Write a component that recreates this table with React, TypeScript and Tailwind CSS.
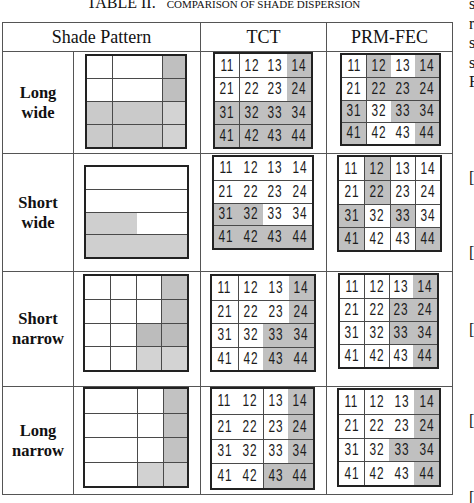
import React from "react";

const serif = { fontFamily: '"Liberation Serif", "Times New Roman", serif' };
const sans = { fontFamily: '"Liberation Sans", Arial, sans-serif' };

type NumGridProps = {
  box: string;
  pad: string;
  shade: string;
  vl: [boolean, boolean, boolean];
};

function NumGrid({ box, pad, shade, vl }: NumGridProps) {
  const s = shade.replace(/\s/g, "");
  const cells = [];
  for (let r = 0; r < 4; r++) {
    for (let c = 0; c < 4; c++) {
      const g = s[r * 4 + c] === "1";
      const left = c > 0 && vl[c - 1];
      cells.push(
        <div
          key={r * 4 + c}
          className={`flex items-center justify-center text-[16px] leading-none text-[#1c1c1c] ${g ? "bg-[#c0c0c0]" : "bg-white"} ${r > 0 ? "border-t border-t-[#4a4a4a]" : ""} ${left ? "border-l border-l-[#4a4a4a]" : ""}`}
          style={sans}
        >
          <span className="inline-block scale-x-[0.74] tracking-[1px]">{`${r + 1}${c + 1}`}</span>
        </div>
      );
    }
  }
  return (
    <div className={`flex ${pad}`}>
      <div className={`grid grid-cols-4 grid-rows-4 border-2 border-[#222] ${box}`}>{cells}</div>
    </div>
  );
}

type PCell = { w: string; bg: string; line?: boolean };

function Pattern({ box, pad, rows }: { box: string; pad: string; rows: PCell[][] }) {
  return (
    <div className={`flex ${pad}`}>
      <div className={`flex flex-col border-2 border-[#222] ${box}`}>
        {rows.map((row, i) => (
          <div key={i} className={`flex flex-1 ${i > 0 ? "border-t border-t-[#4a4a4a]" : ""}`}>
            {row.map((c, j) => (
              <div
                key={j}
                className={`${c.w} ${c.bg} ${j > 0 && c.line !== false ? "border-l border-l-[#4a4a4a]" : ""}`}
              />
            ))}
          </div>
        ))}
      </div>
    </div>
  );
}

const W = "bg-white";

function Label({ a, b }: { a: string; b: string }) {
  return (
    <div className="bg-white flex flex-col items-center justify-center text-[16.5px] leading-[20px] font-bold text-[#111]" style={serif}>
      <span>{a}</span>
      <span>{b}</span>
    </div>
  );
}

export default function App() {
  return (
    <div className="bg-white w-[474px] h-[503px] overflow-hidden flex text-black">
      <div className="ml-[2px] flex flex-col w-[451px]">
        <div className="-mt-[5px] mb-[11px] h-[16px] flex items-baseline justify-center pr-[8px] leading-none text-[#111]" style={serif}>
          <span className="text-[16px]">TABLE II.</span>
          <span className="text-[11px] ml-[11px]">COMPARISON OF SHADE DISPERSION</span>
        </div>
        <div className="grid grid-cols-[70px_126px_125px_125px] grid-rows-[28px_101px_117px_114px_107px] gap-px bg-[#555] border border-[#555]">
          <div className="col-span-2 bg-white flex items-center justify-center text-[18px] text-[#111]" style={serif}>Shade Pattern</div>
          <div className="bg-white flex items-center justify-center text-[18px] text-[#111]" style={serif}>TCT</div>
          <div className="bg-white flex items-center justify-center text-[18px] text-[#111]" style={serif}>PRM-FEC</div>

          {/* Row 1 */}
          <Label a="Long" b="wide" />
          <div className="bg-white">
            <Pattern
              pad="pl-[11px] pt-[2px]"
              box="w-[102px] h-[95px]"
              rows={[
                [{ w: "w-[25px]", bg: W }, { w: "w-[50px]", bg: W }, { w: "flex-1", bg: "bg-[#bfbfbf]" }],
                [{ w: "w-[25px]", bg: W }, { w: "w-[50px]", bg: W }, { w: "flex-1", bg: "bg-[#bfbfbf]" }],
                [{ w: "w-[25px]", bg: "bg-[#cacaca]" }, { w: "w-[50px]", bg: "bg-[#cacaca]" }, { w: "flex-1", bg: "bg-[#d3d3d3]" }],
                [{ w: "w-[25px]", bg: "bg-[#cacaca]" }, { w: "w-[50px]", bg: "bg-[#cacaca]" }, { w: "flex-1", bg: "bg-[#d3d3d3]" }],
              ]}
            />
          </div>
          <div className="bg-white">
            <NumGrid pad="pl-[12px] pt-0" box="w-[100px] h-[97px]" shade="0001 0001 1111 1111" vl={[true, false, false]} />
          </div>
          <div className="bg-white">
            <NumGrid pad="pl-[13px] pt-[1px]" box="w-[101px] h-[93px]" shade="0101 0111 1011 1001" vl={[true, false, false]} />
          </div>

          {/* Row 2 */}
          <Label a="Short" b="wide" />
          <div className="bg-white">
            <Pattern
              pad="pl-[10px] pt-[11px]"
              box="w-[105px] h-[94px]"
              rows={[
                [{ w: "flex-1", bg: W }],
                [{ w: "flex-1", bg: W }],
                [{ w: "w-[51px]", bg: "bg-[#cfcfcf]" }, { w: "flex-1", bg: W, line: false }],
                [{ w: "flex-1", bg: "bg-[#cfcfcf]" }],
              ]}
            />
          </div>
          <div className="bg-white">
            <NumGrid pad="pl-[11px] pt-[1px]" box="w-[102px] h-[95px]" shade="0000 0000 1100 1111" vl={[false, false, false]} />
          </div>
          <div className="bg-white">
            <NumGrid pad="pl-[10px] pt-[1px]" box="w-[105px] h-[97px]" shade="0100 0100 1010 1001" vl={[true, true, true]} />
          </div>

          {/* Row 3 */}
          <Label a="Short" b="narrow" />
          <div className="bg-white">
            <Pattern
              pad="pl-[9px] pt-[2px]"
              box="w-[106px] h-[98px]"
              rows={[
                [{ w: "flex-1", bg: W }, { w: "flex-1", bg: W }, { w: "flex-1", bg: W }, { w: "flex-1", bg: "bg-[#c3c3c3]" }],
                [{ w: "flex-1", bg: W }, { w: "flex-1", bg: W }, { w: "flex-1", bg: W }, { w: "flex-1", bg: "bg-[#c3c3c3]" }],
                [{ w: "flex-1", bg: W }, { w: "flex-1", bg: W }, { w: "flex-1", bg: "bg-[#bcbcbc]" }, { w: "flex-1", bg: "bg-[#bcbcbc]" }],
                [{ w: "flex-1", bg: W }, { w: "flex-1", bg: W }, { w: "flex-1", bg: "bg-[#d3d3d3]" }, { w: "flex-1", bg: "bg-[#d3d3d3]" }],
              ]}
            />
          </div>
          <div className="bg-white">
            <NumGrid pad="pl-[9px] pt-[2px]" box="w-[106px] h-[98px]" shade="0001 0001 0011 0011" vl={[true, false, false]} />
          </div>
          <div className="bg-white">
            <NumGrid pad="pl-[11px] pt-[1px]" box="w-[101px] h-[96px]" shade="0001 0011 0011 0001" vl={[true, true, false]} />
          </div>

          {/* Row 4 */}
          <Label a="Long" b="narrow" />
          <div className="bg-white">
            <Pattern
              pad="pl-[9px] pt-0"
              box="w-[106px] h-[101px]"
              rows={[
                [{ w: "w-[52px]", bg: W }, { w: "w-[26px]", bg: W }, { w: "flex-1", bg: "bg-[#c2c2c2]" }],
                [{ w: "w-[52px]", bg: W }, { w: "w-[26px]", bg: W }, { w: "flex-1", bg: "bg-[#c2c2c2]" }],
                [{ w: "w-[52px]", bg: W }, { w: "w-[26px]", bg: W }, { w: "flex-1", bg: "bg-[#c2c2c2]" }],
                [{ w: "w-[52px]", bg: W }, { w: "w-[26px]", bg: "bg-[#d2d2d2]" }, { w: "flex-1", bg: "bg-[#d2d2d2]" }],
              ]}
            />
          </div>
          <div className="bg-white">
            <NumGrid pad="pl-[9px] pt-0" box="w-[105px] h-[103px]" shade="0001 0001 0001 0011" vl={[false, true, false]} />
          </div>
          <div className="bg-white">
            <NumGrid pad="pl-[10px] pt-[1px]" box="w-[104px] h-[99px]" shade="0001 0001 0011 0001" vl={[true, false, false]} />
          </div>
        </div>
      </div>

      <div className="ml-[16px] flex flex-col text-[16px] leading-[19.5px] text-[#111] whitespace-nowrap" style={serif}>
        <span className="-mt-[6px]">s</span>
        <span>r</span>
        <span>s</span>
        <span>s</span>
        <span>F</span>
        <span className="mt-[76px]">[</span>
        <span className="mt-[56px]">[</span>
        <span className="mt-[57px]">[</span>
        <span className="mt-[72px]">[</span>
        <span className="mt-[57px]">[</span>
      </div>
    </div>
  );
}
